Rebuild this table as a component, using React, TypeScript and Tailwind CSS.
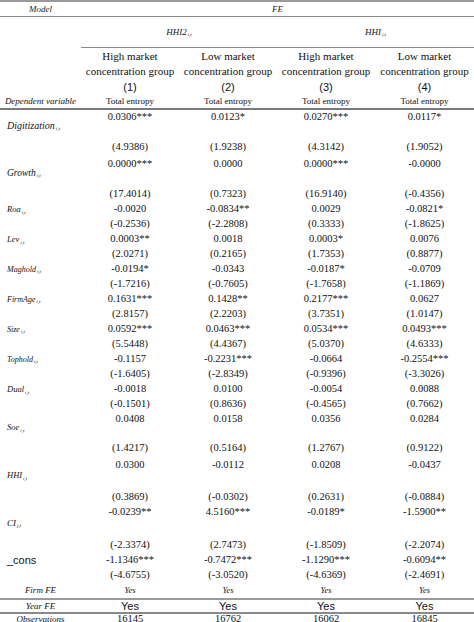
import React from "react";

type Row = {
  label: string;
  sub?: string;
  labelSize: string;
  sans?: boolean;
  coef: string[];
  t: string[];
  tall?: { s1: string; s2: string; pt: string };
};

const rows: Row[] = [
  { label: "Digitization", sub: "i,t", labelSize: "text-[10px]", coef: ["0.0306***", "0.0123*", "0.0270***", "0.0117*"], t: ["(4.9386)", "(1.9238)", "(4.3142)", "(1.9052)"], tall: { s1: "h-[15px]", s2: "h-[2px]", pt: "pt-[8px]" } },
  { label: "Growth", sub: "i,t", labelSize: "text-[9.5px]", coef: ["0.0000***", "0.0000", "0.0000***", "-0.0000"], t: ["(17.4014)", "(0.7323)", "(16.9140)", "(-0.4356)"], tall: { s1: "h-[15px]", s2: "h-[0px]", pt: "pt-[9px]" } },
  { label: "Roa", sub: "i,t", labelSize: "text-[8.5px]", coef: ["-0.0020", "-0.0834**", "0.0029", "-0.0821*"], t: ["(-0.2536)", "(-2.2808)", "(0.3333)", "(-1.8625)"] },
  { label: "Lev", sub: "i,t", labelSize: "text-[8.5px]", coef: ["0.0003**", "0.0018", "0.0003*", "0.0076"], t: ["(2.0271)", "(0.2165)", "(1.7353)", "(0.8877)"] },
  { label: "Maghold", sub: "i,t", labelSize: "text-[8px]", coef: ["-0.0194*", "-0.0343", "-0.0187*", "-0.0709"], t: ["(-1.7216)", "(-0.7605)", "(-1.7658)", "(-1.1869)"] },
  { label: "FirmAge", sub: "i,t", labelSize: "text-[8px]", coef: ["0.1631***", "0.1428**", "0.2177***", "0.0627"], t: ["(2.8157)", "(2.2203)", "(3.7351)", "(1.0147)"] },
  { label: "Size", sub: "i,t", labelSize: "text-[8px]", coef: ["0.0592***", "0.0463***", "0.0534***", "0.0493***"], t: ["(5.5448)", "(4.4367)", "(5.0370)", "(4.6333)"] },
  { label: "Tophold", sub: "i,t", labelSize: "text-[8px]", coef: ["-0.1157", "-0.2231***", "-0.0664", "-0.2554***"], t: ["(-1.6405)", "(-2.8349)", "(-0.9396)", "(-3.3026)"] },
  { label: "Dual", sub: "i,t", labelSize: "text-[8.5px]", coef: ["-0.0018", "0.0100", "-0.0054", "0.0088"], t: ["(-0.1501)", "(0.8636)", "(-0.4565)", "(0.7662)"] },
  { label: "Soe", sub: "i,t", labelSize: "text-[8.5px]", coef: ["0.0408", "0.0158", "0.0356", "0.0284"], t: ["(1.4217)", "(0.5164)", "(1.2767)", "(0.9122)"], tall: { s1: "h-[14px]", s2: "h-[2px]", pt: "pt-[8px]" } },
  { label: "HHI", sub: "i,t", labelSize: "text-[8.5px]", coef: ["0.0300", "-0.0112", "0.0208", "-0.0437"], t: ["(0.3869)", "(-0.0302)", "(0.2631)", "(-0.0884)"], tall: { s1: "h-[17px]", s2: "h-[0px]", pt: "pt-[10px]" } },
  { label: "CI", sub: "j,t", labelSize: "text-[9px]", coef: ["-0.0239**", "4.5160***", "-0.0189*", "-1.5900**"], t: ["(-2.3374)", "(2.7473)", "(-1.8509)", "(-2.2074)"], tall: { s1: "h-[18px]", s2: "h-[0px]", pt: "pt-[11px]" } },
  { label: "_cons", labelSize: "text-[11px]", sans: true, coef: ["-1.1346***", "-0.7472***", "-1.1290***", "-0.6094**"], t: ["(-4.6755)", "(-3.0520)", "(-4.6369)", "(-2.4691)"] },
];

const SERIF = "font-['Liberation_Serif',serif]";
const SANS = "font-['Liberation_Sans',sans-serif]";

function Label({ r }: { r: Row }) {
  if (r.sans) {
    return <span className={`${SANS} ${r.labelSize} text-[#111]`}>{r.label}</span>;
  }
  return (
    <span className={`${SERIF} italic ${r.labelSize} text-[#111]`}>
      {r.label}
      {r.sub && <sub className="text-[5px] ml-[1px]">{r.sub}</sub>}
    </span>
  );
}

function Cell({ children, h = "h-[15px]" }: { children: React.ReactNode; h?: string }) {
  return (
    <div className={`${h} flex items-center justify-center ${SERIF} text-[10.5px] text-[#111] leading-none`}>
      {children}
    </div>
  );
}

const COLS = "grid grid-cols-[81px_98px_98px_98px_99px]";

function Block({ r }: { r: Row }) {
  return (
    <div className={COLS}>
      <div className={`pl-[7px] ${r.tall ? r.tall.pt : ""}`}>
        <div className="h-[15px] flex items-center leading-none">
          <Label r={r} />
        </div>
      </div>
      {r.coef.map((c, i) => (
        <div key={i} className="flex flex-col">
          <Cell>{c}</Cell>
          {r.tall && <div className={r.tall.s1} />}
          <Cell>{r.t[i]}</Cell>
          {r.tall && <div className={r.tall.s2} />}
        </div>
      ))}
    </div>
  );
}

export default function App() {
  const groups = ["(1)", "(2)", "(3)", "(4)"];
  return (
    <div className="w-[474px] h-[622px] overflow-hidden bg-white text-[#111]">
      {/* top rule */}
      <div className="h-[2px] bg-[#9a9a9a]" />
      {/* Model row */}
      <div className={`${COLS} h-[14px] items-center`}>
        <div className={`${SERIF} italic text-[9px] text-center leading-none text-[#222]`}>Model</div>
        <div className={`col-span-4 ${SERIF} italic text-[9px] text-center leading-none text-[#222]`}>FE</div>
      </div>
      <div className="h-[1px] bg-[#8a8a8a]" />
      {/* HHI group row */}
      <div className={`${COLS} h-[30px] items-center`}>
        <div />
        <div className={`col-span-2 text-center ${SERIF} italic text-[9px] leading-none`}>
          HHI2<sub className="text-[5px] ml-[1px]">i,t</sub>
        </div>
        <div className={`col-span-2 text-center ${SERIF} italic text-[9px] leading-none`}>
          HHI<sub className="text-[5px] ml-[1px]">i,t</sub>
        </div>
      </div>
      <div className="flex">
        <div className="w-[81px]" />
        <div className="flex-1 h-[1px] bg-[#8a8a8a]" />
      </div>
      {/* column headings */}
      <div className={`${COLS} h-[60px]`}>
        <div className="flex flex-col justify-end pb-[1px]">
          <div className={`h-[12px] flex items-center justify-center ${SERIF} italic text-[9px] leading-none`}>
            Dependent variable
          </div>
        </div>
        {groups.map((g, i) => (
          <div key={g} className="flex flex-col items-center pt-[1px]">
            <div className={`h-[15px] flex items-center ${SERIF} text-[11px] leading-none whitespace-nowrap`}>
              {i % 2 === 0 ? "High market" : "Low market"}
            </div>
            <div className={`h-[15px] flex items-center ${SERIF} text-[11px] leading-none whitespace-nowrap`}>
              concentration group
            </div>
            <div className={`h-[16px] flex items-center ${SANS} text-[11px] leading-none`}>{g}</div>
            <div className={`h-[12px] flex items-center ${SERIF} text-[9px] leading-none`}>Total entropy</div>
          </div>
        ))}
      </div>
      <div className="h-[1.5px] bg-[#7a7a7a]" />
      {/* body */}
      <div className="pt-[0.5px]">
        {rows.map((r) => (
          <Block key={r.label} r={r} />
        ))}
      </div>
      {/* Firm FE */}
      <div className={`${COLS} h-[15px] items-center`}>
        <div className={`${SERIF} italic text-[9px] text-center leading-none`}>Firm FE</div>
        {[0, 1, 2, 3].map((i) => (
          <div key={i} className={`${SERIF} italic text-[8.5px] text-center leading-none`}>Yes</div>
        ))}
      </div>
      <div className="h-[2px] bg-[#9a9a9a]" />
      {/* Year FE */}
      <div className={`${COLS} h-[12px] items-center`}>
        <div className={`${SERIF} italic text-[9px] text-center leading-none`}>Year FE</div>
        {[0, 1, 2, 3].map((i) => (
          <div key={i} className={`${SANS} text-[11px] text-center leading-none`}>Yes</div>
        ))}
      </div>
      <div className="h-[1.5px] bg-[#8a8a8a]" />
      {/* Observations */}
      <div className={`${COLS} h-[12px] items-center`}>
        <div className={`${SERIF} italic text-[9px] text-center leading-none`}>Observations</div>
        {["16145", "16762", "16062", "16845"].map((n) => (
          <div key={n} className={`${SERIF} text-[10.5px] text-center leading-none`}>{n}</div>
        ))}
      </div>
    </div>
  );
}
